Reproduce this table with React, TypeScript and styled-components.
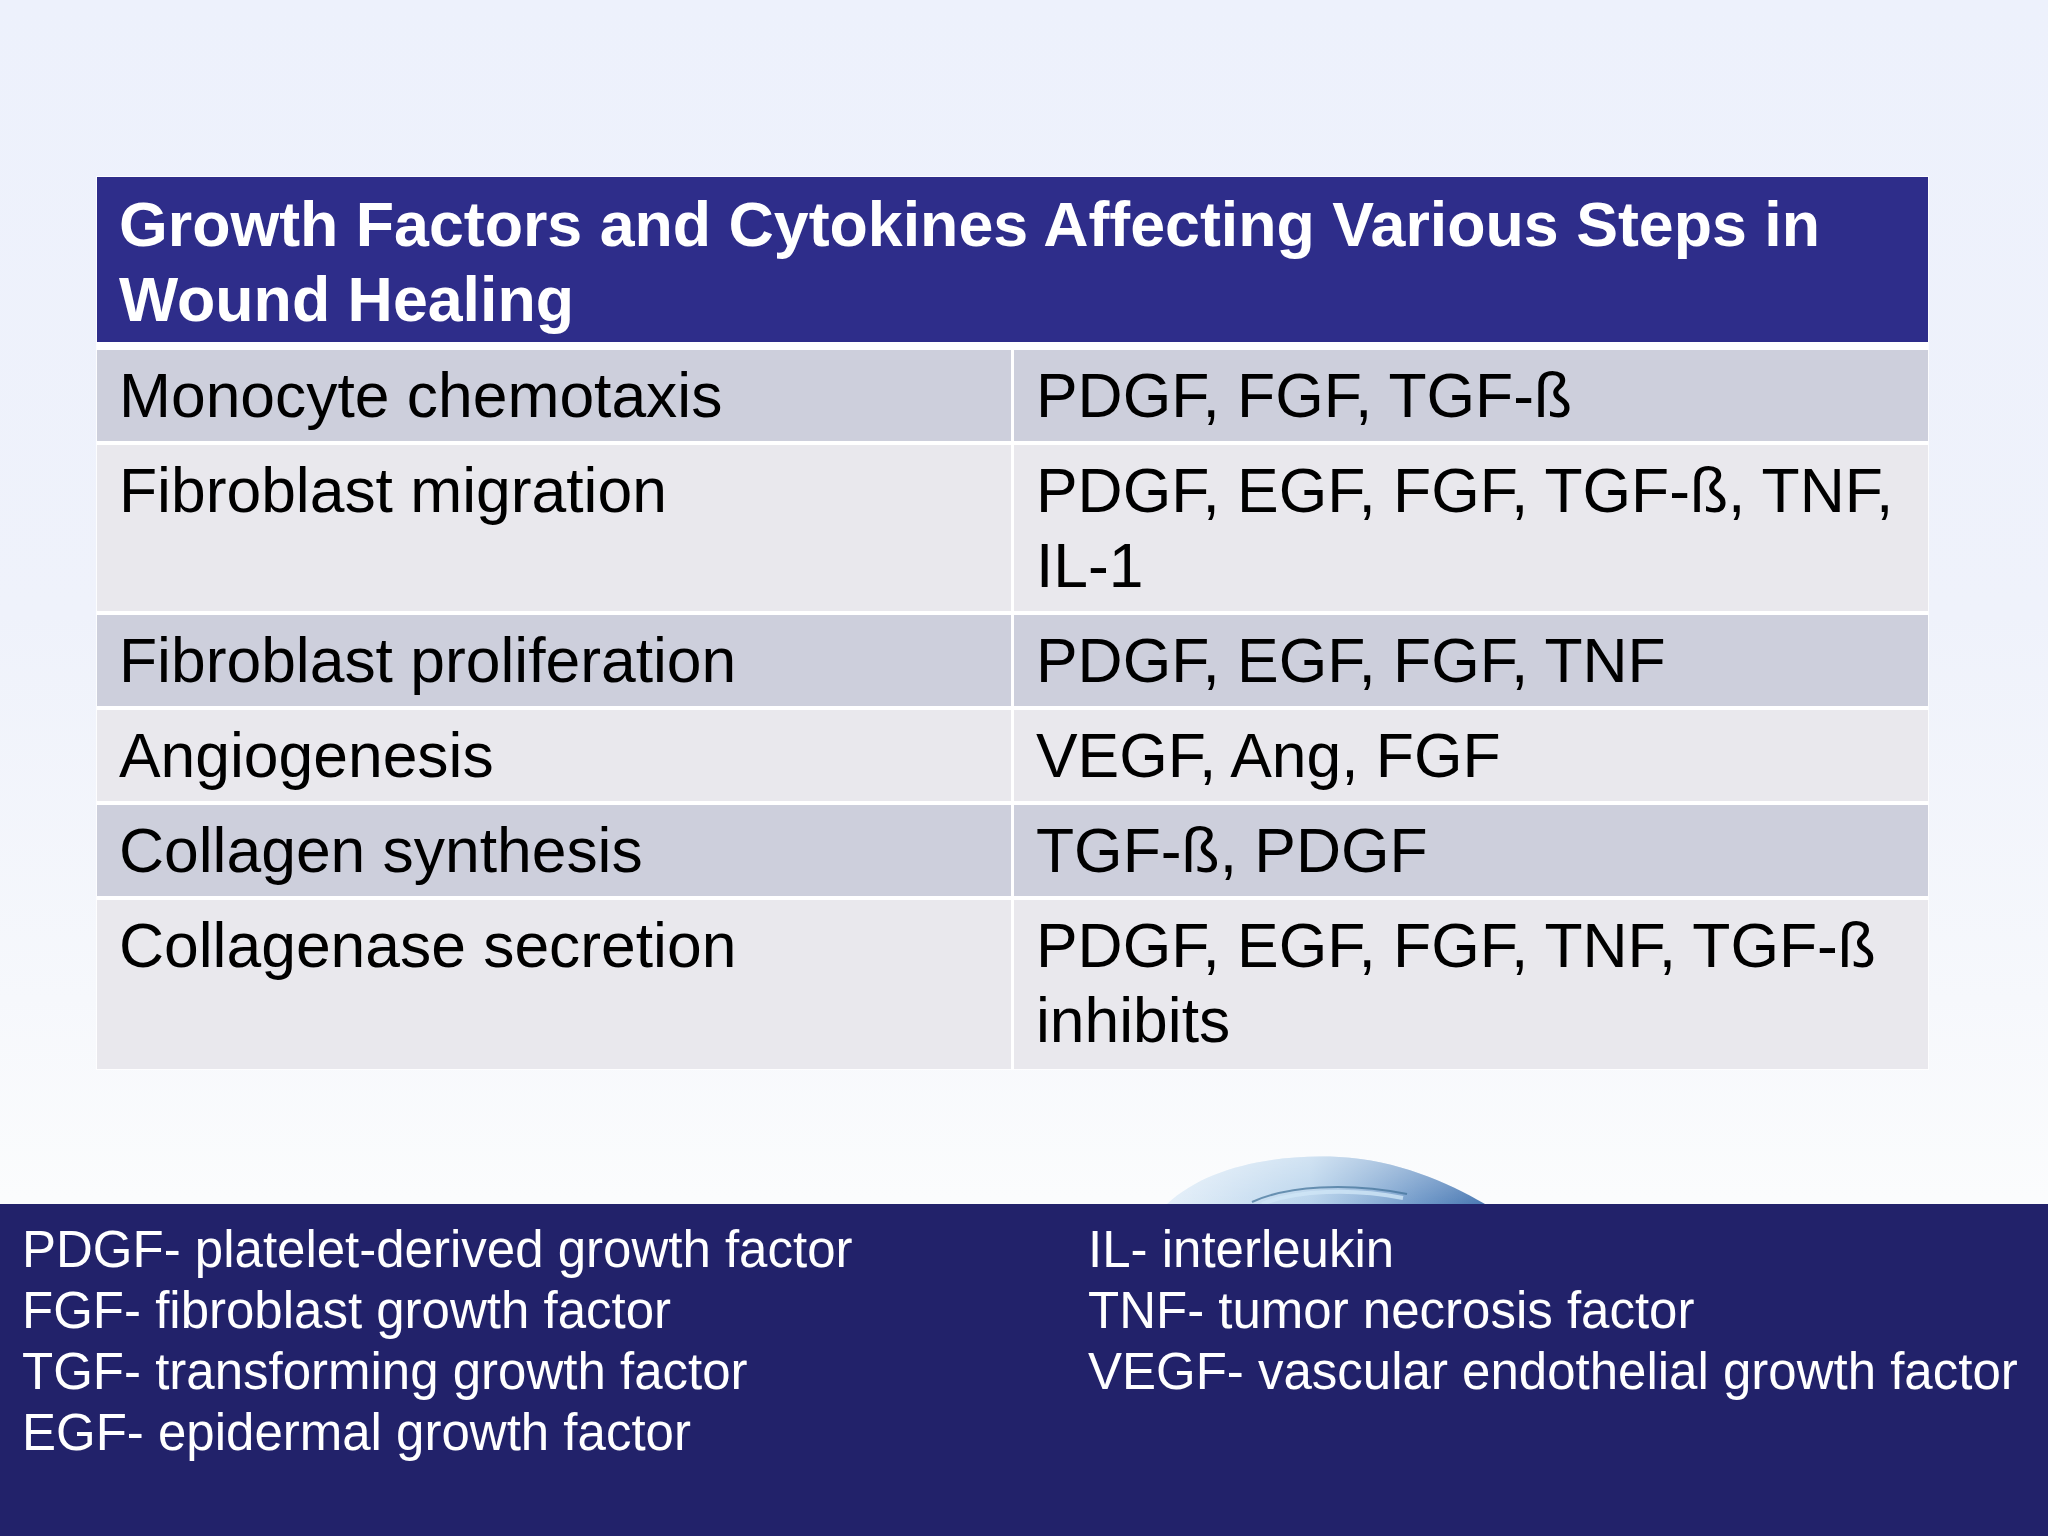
import React from "react";
import styled, { createGlobalStyle } from "styled-components";

const GlobalStyle = createGlobalStyle`
  html, body {
    margin: 0;
    padding: 0;
  }
  body {
    font-family: "Liberation Sans", Arial, sans-serif;
  }
`;

const rows: { step: string; factors: string }[] = [
  { step: "Monocyte chemotaxis", factors: "PDGF, FGF, TGF-ß" },
  { step: "Fibroblast migration", factors: "PDGF, EGF, FGF, TGF-ß, TNF, IL-1" },
  { step: "Fibroblast proliferation", factors: "PDGF, EGF, FGF, TNF" },
  { step: "Angiogenesis", factors: "VEGF, Ang, FGF" },
  { step: "Collagen synthesis", factors: "TGF-ß, PDGF" },
  { step: "Collagenase secretion", factors: "PDGF, EGF, FGF, TNF, TGF-ß inhibits" },
];

const legendLeft = [
  "PDGF- platelet-derived growth factor",
  "FGF- fibroblast growth factor",
  "TGF- transforming growth factor",
  "EGF- epidermal growth factor",
];

const legendRight = [
  "IL- interleukin",
  "TNF- tumor necrosis factor",
  "VEGF- vascular endothelial growth factor",
];

const App = () => {
  return (
    <>
      <GlobalStyle />
      <Slide>
        <TableArea>
          <Table>
            <HeaderCell>Growth Factors and Cytokines Affecting Various Steps in Wound Healing</HeaderCell>
            {rows.map((r, i) => (
              <React.Fragment key={r.step}>
                <Cell $shaded={i % 2 === 0} $last={i === rows.length - 1}>{r.step}</Cell>
                <Cell $shaded={i % 2 === 0} $last={i === rows.length - 1}>{r.factors}</Cell>
              </React.Fragment>
            ))}
          </Table>
        </TableArea>
        <Globe viewBox="0 0 320 60" aria-hidden="true">
          <defs>
            <linearGradient id="globeFill" x1="0" y1="0" x2="1" y2="0">
              <stop offset="0" stopColor="#e4eff9" />
              <stop offset="0.45" stopColor="#b9d4ec" />
              <stop offset="0.8" stopColor="#6f98c8" />
              <stop offset="1" stopColor="#4a78b2" />
            </linearGradient>
            <linearGradient id="globeFade" x1="0" y1="0" x2="0" y2="1">
              <stop offset="0" stopColor="#ffffff" stopOpacity="0.35" />
              <stop offset="1" stopColor="#ffffff" stopOpacity="0" />
            </linearGradient>
          </defs>
          <path d="M0 60 C 40 22, 110 10, 172 13 C 230 16, 280 38, 318 60 Z" fill="url(#globeFill)" />
          <path d="M0 60 C 40 22, 110 10, 172 13 C 230 16, 280 38, 318 60 Z" fill="url(#globeFade)" />
          <path d="M85 58 C 120 42, 180 38, 240 50" stroke="#3f6f96" strokeWidth="2" fill="none" opacity="0.7" />
          <path d="M95 60 C 130 46, 185 44, 236 54" stroke="#cfe6f6" strokeWidth="4" fill="none" opacity="0.8" />
        </Globe>
        <Legend>
          <LegendColumn>
            {legendLeft.map((t) => (
              <LegendLine key={t}>{t}</LegendLine>
            ))}
          </LegendColumn>
          <LegendColumn>
            {legendRight.map((t) => (
              <LegendLine key={t}>{t}</LegendLine>
            ))}
          </LegendColumn>
        </Legend>
      </Slide>
    </>
  );
};

export default App;

const Slide = styled.div`
  position: relative;
  width: 2048px;
  height: 1536px;
  overflow: hidden;
  display: flex;
  flex-direction: column;
  background: linear-gradient(180deg, #edf1fc 0%, #eff2fb 40%, #f6f8fc 65%, #fbfcfd 78%, #fbfcfd 100%);
`;

const TableArea = styled.div`
  flex: 1;
  padding: 177px 0 0 97px;
`;

const Table = styled.div`
  display: grid;
  grid-template-columns: 914px 914px;
  column-gap: 3px;
  row-gap: 4px;
  width: 1831px;
  background: #ffffff;
  box-shadow: 0 0 0 1px rgba(255, 255, 255, 0.8);
`;

const HeaderCell = styled.div`
  grid-column: 1 / -1;
  margin-bottom: 4px;
  padding: 10px 22px 5px;
  background: #2e2d8a;
  color: #ffffff;
  font-weight: bold;
  font-size: 62.7px;
  line-height: 75px;
`;

const Cell = styled.div<{ $shaded: boolean; $last: boolean }>`
  padding: 8px 22px ${(p) => (p.$last ? "11px" : "8px")};
  background: ${(p) => (p.$shaded ? "#cdcfdc" : "#e9e8ed")};
  color: #000000;
  font-size: 62.4px;
  line-height: 75px;
`;

const Globe = styled.svg`
  position: absolute;
  left: 1167px;
  top: 1144px;
  width: 320px;
  height: 60px;
`;

const Legend = styled.div`
  position: relative;
  height: 332px;
  box-sizing: border-box;
  padding: 15px 0 0 22px;
  background: #22226a;
  display: grid;
  grid-template-columns: 1066px 1fr;
`;

const LegendColumn = styled.div`
  display: flex;
  flex-direction: column;
`;

const LegendLine = styled.div`
  color: #ffffff;
  font-size: 51px;
  line-height: 61px;
  white-space: nowrap;
`;
